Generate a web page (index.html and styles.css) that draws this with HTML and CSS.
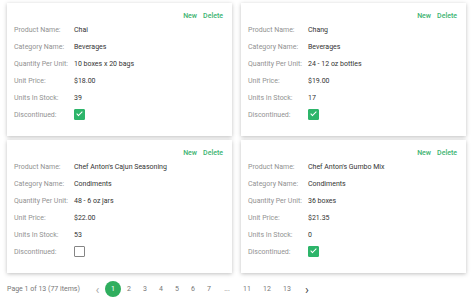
FILE: index.html
```html
<!DOCTYPE html>
<html lang="en">
<head>
<meta charset="UTF-8" />
<title>Products</title>
<link rel="stylesheet" href="styles.css">
</head>
<body>
<div class="cards">
    <div class="card">
        <div class="actions"><a>New</a><a>Delete</a></div>
        <div class="fields">
            <span class="lbl">Product Name:</span><span class="val">Chai</span>
            <span class="lbl">Category Name:</span><span class="val">Beverages</span>
            <span class="lbl">Quantity Per Unit:</span><span class="val">10 boxes x 20 bags</span>
            <span class="lbl">Unit Price:</span><span class="val">$18.00</span>
            <span class="lbl">Units In Stock:</span><span class="val">39</span>
            <span class="lbl">Discontinued:</span><span class="val"><span class="chk on"></span></span>
        </div>
    </div>
    <div class="card">
        <div class="actions"><a>New</a><a>Delete</a></div>
        <div class="fields">
            <span class="lbl">Product Name:</span><span class="val">Chang</span>
            <span class="lbl">Category Name:</span><span class="val">Beverages</span>
            <span class="lbl">Quantity Per Unit:</span><span class="val">24 - 12 oz bottles</span>
            <span class="lbl">Unit Price:</span><span class="val">$19.00</span>
            <span class="lbl">Units In Stock:</span><span class="val">17</span>
            <span class="lbl">Discontinued:</span><span class="val"><span class="chk on"></span></span>
        </div>
    </div>
    <div class="card">
        <div class="actions"><a>New</a><a>Delete</a></div>
        <div class="fields">
            <span class="lbl">Product Name:</span><span class="val">Chef Anton's Cajun Seasoning</span>
            <span class="lbl">Category Name:</span><span class="val">Condiments</span>
            <span class="lbl">Quantity Per Unit:</span><span class="val">48 - 6 oz jars</span>
            <span class="lbl">Unit Price:</span><span class="val">$22.00</span>
            <span class="lbl">Units In Stock:</span><span class="val">53</span>
            <span class="lbl">Discontinued:</span><span class="val"><span class="chk"></span></span>
        </div>
    </div>
    <div class="card">
        <div class="actions"><a>New</a><a>Delete</a></div>
        <div class="fields">
            <span class="lbl">Product Name:</span><span class="val">Chef Anton's Gumbo Mix</span>
            <span class="lbl">Category Name:</span><span class="val">Condiments</span>
            <span class="lbl">Quantity Per Unit:</span><span class="val">36 boxes</span>
            <span class="lbl">Unit Price:</span><span class="val">$21.35</span>
            <span class="lbl">Units In Stock:</span><span class="val">0</span>
            <span class="lbl">Discontinued:</span><span class="val"><span class="chk on"></span></span>
        </div>
    </div>
</div>
<div class="pager">
    <span class="info">Page 1 of 13 (77 items)</span>
    <span class="nav">&lsaquo;</span>
    <span class="pg cur">1</span>
    <span class="pg">2</span>
    <span class="pg">3</span>
    <span class="pg">4</span>
    <span class="pg">5</span>
    <span class="pg">6</span>
    <span class="pg">7</span>
    <span class="pg wide">...</span>
    <span class="pg wide">11</span>
    <span class="pg wide">12</span>
    <span class="pg wide">13</span>
    <span class="nav next">&rsaquo;</span>
</div>
</body>
</html>
```

FILE: styles.css
```css
body{
    margin: 0;
    padding: 3px 8px 0 7px;
    background-color: white;
    font-family: Roboto, "Liberation Sans", sans-serif;
    font-size: 7px;
}
.cards{
    display: grid;
    grid-template-columns: 1fr 1fr;
    column-gap: 9px;
    row-gap: 4px;
}
.card{
    background-color: white;
    height: 133px;
    box-shadow: 0 1px 4px 0 rgba(0,0,0,0.25);
    padding: 0 7px;
    box-sizing: border-box;
}
.actions{
    display: flex;
    justify-content: flex-end;
    gap: 6px;
    padding: 9px 2px 0 0;
    height: 9px;
    line-height: 9px;
}
.actions a{
    color: #3cb371;
    font-weight: 500;
}
.fields{
    display: grid;
    grid-template-columns: 60px 1fr;
    grid-auto-rows: 17px;
    align-items: center;
    white-space: nowrap;
}
.lbl{
    color: #929292;
}
.val{
    color: #333;
    display: flex;
    align-items: center;
}
.chk{
    width: 9px;
    height: 9px;
    border: 1px solid #858585;
    border-radius: 1px;
    display: inline-block;
    position: relative;
}
.chk.on{
    background-color: #2db56a;
    border-color: #2db56a;
}
.chk.on::after{
    content: "";
    position: absolute;
    left: 3px;
    top: 0px;
    width: 2px;
    height: 5px;
    border: solid white;
    border-width: 0 1.5px 1.5px 0;
    transform: rotate(45deg);
}
.pager{
    display: flex;
    align-items: center;
    height: 32px;
    color: #777;
}
.info{
    width: 83px;
}
.nav{
    font-size: 13px;
    width: 15px;
    color: #aaa;
    text-align: center;
}
.nav.next{
    width: 20px;
    color: #444;
}
.pg{
    width: 16px;
    height: 16px;
    line-height: 16px;
    text-align: center;
}
.pg.wide{
    width: 20px;
}
.pg.cur{
    background-color: #2fae5e;
    color: white;
    border-radius: 50%;
}
```
